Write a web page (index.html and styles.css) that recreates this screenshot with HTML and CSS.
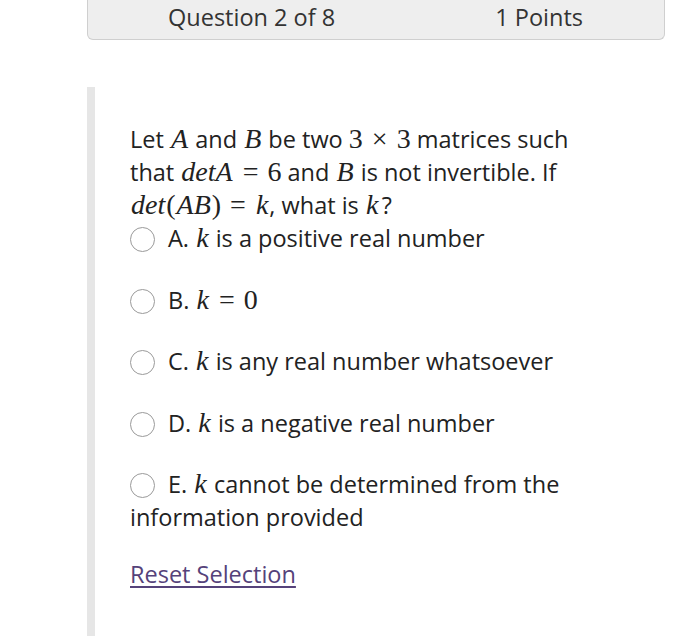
FILE: index.html
```html
<!DOCTYPE html>
<html lang="en">
<head>
    <meta charset="UTF-8">
    <meta name="viewport" content="width=device-width, initial-scale=1.0">
    <title>Question 2 of 8</title>
    <link rel="stylesheet" href="styles.css">
</head>
<body>
    <!-- Cabecera de la pregunta -->
    <div class="header">
        <span class="q-count">Question 2 of 8</span>
        <span class="q-points">1 Points</span>
    </div>

    <!-- Pregunta -->
    <div class="question">
        <p class="prompt">
            Let <span class="m">A</span> and <span class="m">B</span> be two
            <span class="mr">3</span><span class="op">×</span><span class="mr">3</span> matrices such
            that <span class="m">detA</span><span class="op">=</span><span class="mr">6</span> and
            <span class="m">B</span> is not invertible. If
            <span class="m">det</span><span class="mr">(</span><span class="m">AB</span><span class="mr">)</span><span class="op">=</span><span class="m">k</span>, what is <span class="m">k</span>&#8202;?
        </p>

        <div class="option"><span class="radio"></span>A. <span class="m">k</span> is a positive real number</div>
        <div class="option"><span class="radio"></span>B. <span class="m">k</span><span class="op">=</span><span class="mr">0</span></div>
        <div class="option"><span class="radio"></span>C. <span class="m">k</span> is any real number whatsoever</div>
        <div class="option"><span class="radio"></span>D. <span class="m">k</span> is a negative real number</div>
        <div class="option"><span class="radio"></span>E. <span class="m">k</span> cannot be determined from the information provided</div>

        <a class="reset" href="#">Reset Selection</a>
    </div>
</body>
</html>
```

FILE: styles.css
```css
body {
    font-family: "Open Sans", sans-serif;
    font-size: 23.5px;
    color: #222;
    background-color: #fff;
    margin: 0;
    padding: 0;
}
.header {
    display: flex;
    align-items: center;
    box-sizing: border-box;
    margin-left: 87px;
    width: 578px;
    height: 40px;
    padding-bottom: 5px;
    background-color: #eeeeee;
    border: 1px solid #cfcfcf;
    border-top: none;
    border-radius: 0 0 6px 6px;
    color: #333;
}
.q-count {
    padding-left: 80px;
}
.q-points {
    margin-left: auto;
    padding-right: 81px;
}
.question {
    margin: 47px 0 2px 87px;
    border-left: 8px solid #e6e6e6;
    padding: 36px 0 51px 35px;
    width: 470px;
    line-height: 33px;
}
.prompt {
    margin: 0;
}
.m, .mr, .op {
    font-family: "Liberation Serif", "DejaVu Serif", serif;
    font-size: 28px;
    line-height: 20px;
}
.m {
    font-style: italic;
    padding: 0 1px;
}
.op {
    margin: 0 9px;
}
.option {
    margin-bottom: 28.5px;
}
.radio {
    display: inline-block;
    width: 23px;
    height: 23px;
    border: 1.5px solid #9a9a9a;
    border-radius: 50%;
    vertical-align: -5px;
    margin-right: 13px;
    box-sizing: content-box;
}
.reset {
    display: block;
    width: fit-content;
    margin-top: -5px;
    color: #55427a;
    text-decoration: underline;
    text-underline-offset: 3px;
}
```
